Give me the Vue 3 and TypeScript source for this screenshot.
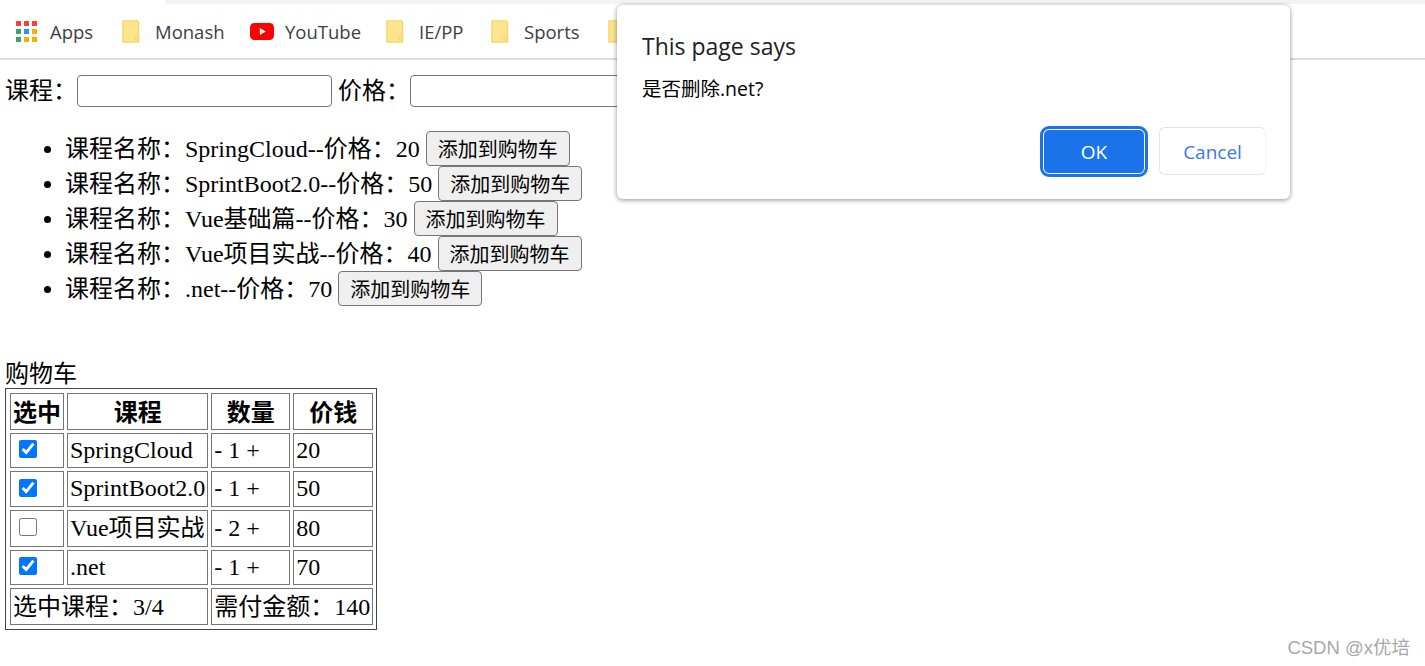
<script setup lang="ts">
interface Course { name: string; price: number }
interface CartRow { name: string; qty: number; total: number; checked: boolean }

const bookmarks = ['Monash', 'YouTube', 'IE/PP', 'Sports']
const courses: Course[] = [
  { name: 'SpringCloud', price: 20 },
  { name: 'SprintBoot2.0', price: 50 },
  { name: 'Vue基础篇', price: 30 },
  { name: 'Vue项目实战', price: 40 },
  { name: '.net', price: 70 },
]
const cart: CartRow[] = [
  { name: 'SpringCloud', qty: 1, total: 20, checked: true },
  { name: 'SprintBoot2.0', qty: 1, total: 50, checked: true },
  { name: 'Vue项目实战', qty: 2, total: 80, checked: false },
  { name: '.net', qty: 1, total: 70, checked: true },
]
const appColors = ['#f44336', '#f44336', '#f44336', '#3ba55d', '#2196f3', '#ffab00', '#3ba55d', '#ffab00', '#ffab00']
</script>

<template>
  <div class="page">
    <div class="topstrip"></div>
    <nav class="bar">
      <span class="mark">
        <span class="apps"><i v-for="(c, i) in appColors" :key="i" :style="{ background: c }"></i></span>
        Apps
      </span>
      <span v-for="b in bookmarks" :key="b" class="mark" :class="{ 'yt-mark': b === 'YouTube' }">
        <svg v-if="b === 'YouTube'" viewBox="0 0 24 17" width="24" height="17">
          <rect width="24" height="17" rx="4.5" fill="#f00" />
          <path d="M9.800 5v7l6-3.500z" fill="#fff" />
        </svg>
        <svg v-else viewBox="0 0 18 23" width="18" height="23">
          <path d="M1 1h13.500a2 2 0 0 1 2 2v19h-15.500z" fill="#ffe48f" stroke="#f7d768" stroke-width="1.500" stroke-linejoin="round" />
          <path d="M13 22v-3.500a1.700 1.700 0 0 1 3.500 0v3.500" fill="none" stroke="#f7d768" stroke-width="1.200" />
        </svg>
        {{ b }}
      </span>
      <span class="mark">
        <svg viewBox="0 0 18 23" width="18" height="23">
          <path d="M1 1h13.500a2 2 0 0 1 2 2v19h-15.500z" fill="#ffe48f" stroke="#f7d768" stroke-width="1.500" stroke-linejoin="round" />
        </svg>
      </span>
    </nav>

    <main class="content">
      <div class="form">课程：<input type="text" /> 价格：<input type="text" /></div>
      <ul class="list">
        <li v-for="c in courses" :key="c.name">课程名称：{{ c.name }}--价格：{{ c.price }} <button type="button">添加到购物车</button></li>
      </ul>
      <div class="cart-title">购物车</div>
      <table class="cart">
        <thead>
          <tr><th>选中</th><th>课程</th><th>数量</th><th>价钱</th></tr>
        </thead>
        <tbody>
          <tr v-for="r in cart" :key="r.name">
            <td><input type="checkbox" :checked="r.checked" /></td>
            <td>{{ r.name }}</td>
            <td>- {{ r.qty }} +</td>
            <td>{{ r.total }}</td>
          </tr>
          <tr class="summary">
            <td colspan="2">选中课程：3/4</td>
            <td colspan="2">需付金额：140</td>
          </tr>
        </tbody>
      </table>
    </main>

    <div class="dialog">
      <div class="dialog-title">This page says</div>
      <div class="dialog-msg">是否删除.net?</div>
      <div class="dialog-actions">
        <button type="button" class="ok">OK</button>
        <button type="button" class="cancel">Cancel</button>
      </div>
    </div>

    <div class="watermark">CSDN @x优培</div>
  </div>
</template>

<style>
html, body { margin: 0; background: #fff; overflow: hidden; }
</style>

<style scoped>
.page {
  position: relative;
  width: 1425px;
  height: 666px;
  overflow: hidden;
  background: #fff;
  font-family: "Liberation Serif", "Noto Sans CJK SC", serif;
  font-size: 24px;
  color: #000;
}
.topstrip {
  height: 4px;
  margin-left: 165px;
  background: #f1f3f4;
  border-bottom-left-radius: 6px;
}
.bar {
  height: 56px;
  box-sizing: border-box;
  border-bottom: 2px solid #dadce0;
  display: flex;
  align-items: center;
  padding-left: 16px;
  font-family: "Open Sans", "Noto Sans", sans-serif;
  font-size: 18.5px;
  color: #3c4043;
}
.mark { flex: none; display: inline-flex; align-items: center; gap: 15px; white-space: nowrap; }
.mark:nth-child(1) { width: 106px; gap: 14px; }
.mark:nth-child(2) { width: 128px; }
.mark:nth-child(3) { width: 136px; }
.mark:nth-child(4) { width: 105px; }
.mark:nth-child(5) { width: 117px; }
.mark svg { display: block; }
.yt-mark { gap: 11px; }
.apps { display: grid; grid-template-columns: repeat(3, 5px); gap: 3px; margin-right: -1px; }
.apps i { display: block; width: 5px; height: 5px; }
.content { padding: 15px 0 0 5px; }
.form { height: 32px; line-height: 32px; }
.form input {
  width: 255px;
  height: 32px;
  box-sizing: border-box;
  padding: 0;
  margin: 0;
  border: 1px solid #767676;
  border-radius: 4px;
  vertical-align: top;
  background: #fff;
}
.list { margin: 24px 0; padding: 0 0 0 60px; }
.list li { height: 35px; line-height: 36px; white-space: nowrap; }
.list button {
  height: 35px;
  box-sizing: border-box;
  padding: 2px 11px 0;
  margin: 0;
  font: inherit;
  font-size: 20px;
  line-height: 1;
  color: #000;
  background: #efefef;
  border: 1px solid #767676;
  border-radius: 4px;
  vertical-align: top;
}
.cart-title { margin-top: 54px; height: 28px; line-height: 28px; }
.cart {
  border: 1px solid #444;
  border-spacing: 3px;
  padding: 1px 0 1px 1px;
  border-collapse: separate;
}
.cart tr { height: 35px; }
.cart thead tr { height: 37px; }
.cart tbody tr:nth-child(2) { height: 36px; }
.cart tbody tr:nth-child(3), .cart tbody tr:nth-child(5) { height: 37px; }
.cart th, .cart td {
  border: 1px solid #767676;
  white-space: nowrap;
  line-height: 28px;
  vertical-align: middle;
}
.cart th { padding: 3px 2px 1px; font-weight: 700; text-align: center; }
.cart th:nth-child(3) { width: 73px; }
.cart th:nth-child(4) { width: 74px; }
.cart td { padding: 1px 2px 3px; text-align: left; }
.cart .summary td { padding: 2px; }
.cart input[type="checkbox"] {
  width: 18px;
  height: 18px;
  margin: 0 6px 5px 6px;
  vertical-align: middle;
}
.dialog {
  position: absolute;
  left: 617px;
  top: 5px;
  width: 673px;
  height: 194px;
  box-sizing: border-box;
  padding: 25px 24px 0 25px;
  background: #fff;
  border-radius: 6px;
  box-shadow: 0 1px 5px rgba(0, 0, 0, 0.45);
  font-family: "Open Sans", "Noto Sans", "Noto Sans CJK SC", sans-serif;
  color: #202124;
}
.dialog-title { font-size: 23px; line-height: 32px; }
.dialog-msg { margin-top: 15px; font-size: 19.5px; line-height: 24px; color: #000; }
.dialog-actions { display: flex; justify-content: flex-end; align-items: center; gap: 14px; margin-top: 26px; }
.dialog-actions button {
  box-sizing: border-box;
  padding: 2px 0 0;
  font-family: inherit;
  font-size: 19px;
  border-radius: 6px;
}
.ok {
  width: 102px;
  height: 45px;
  background: #1a73e8;
  color: #fff;
  border: 1px solid #fff;
  outline: 3px solid #1a73e8;
  outline-offset: 0;
}
.cancel {
  width: 107px;
  height: 48px;
  background: #fff;
  color: #3b78e7;
  border: 1px solid #e2e4e8;
  border-right-color: #f2f3f5;
}
.watermark {
  position: absolute;
  right: 15px;
  top: 633px;
  font-family: "Liberation Sans", "Noto Sans CJK SC", sans-serif;
  font-size: 18.5px;
  color: #a8a8a8;
}
</style>
